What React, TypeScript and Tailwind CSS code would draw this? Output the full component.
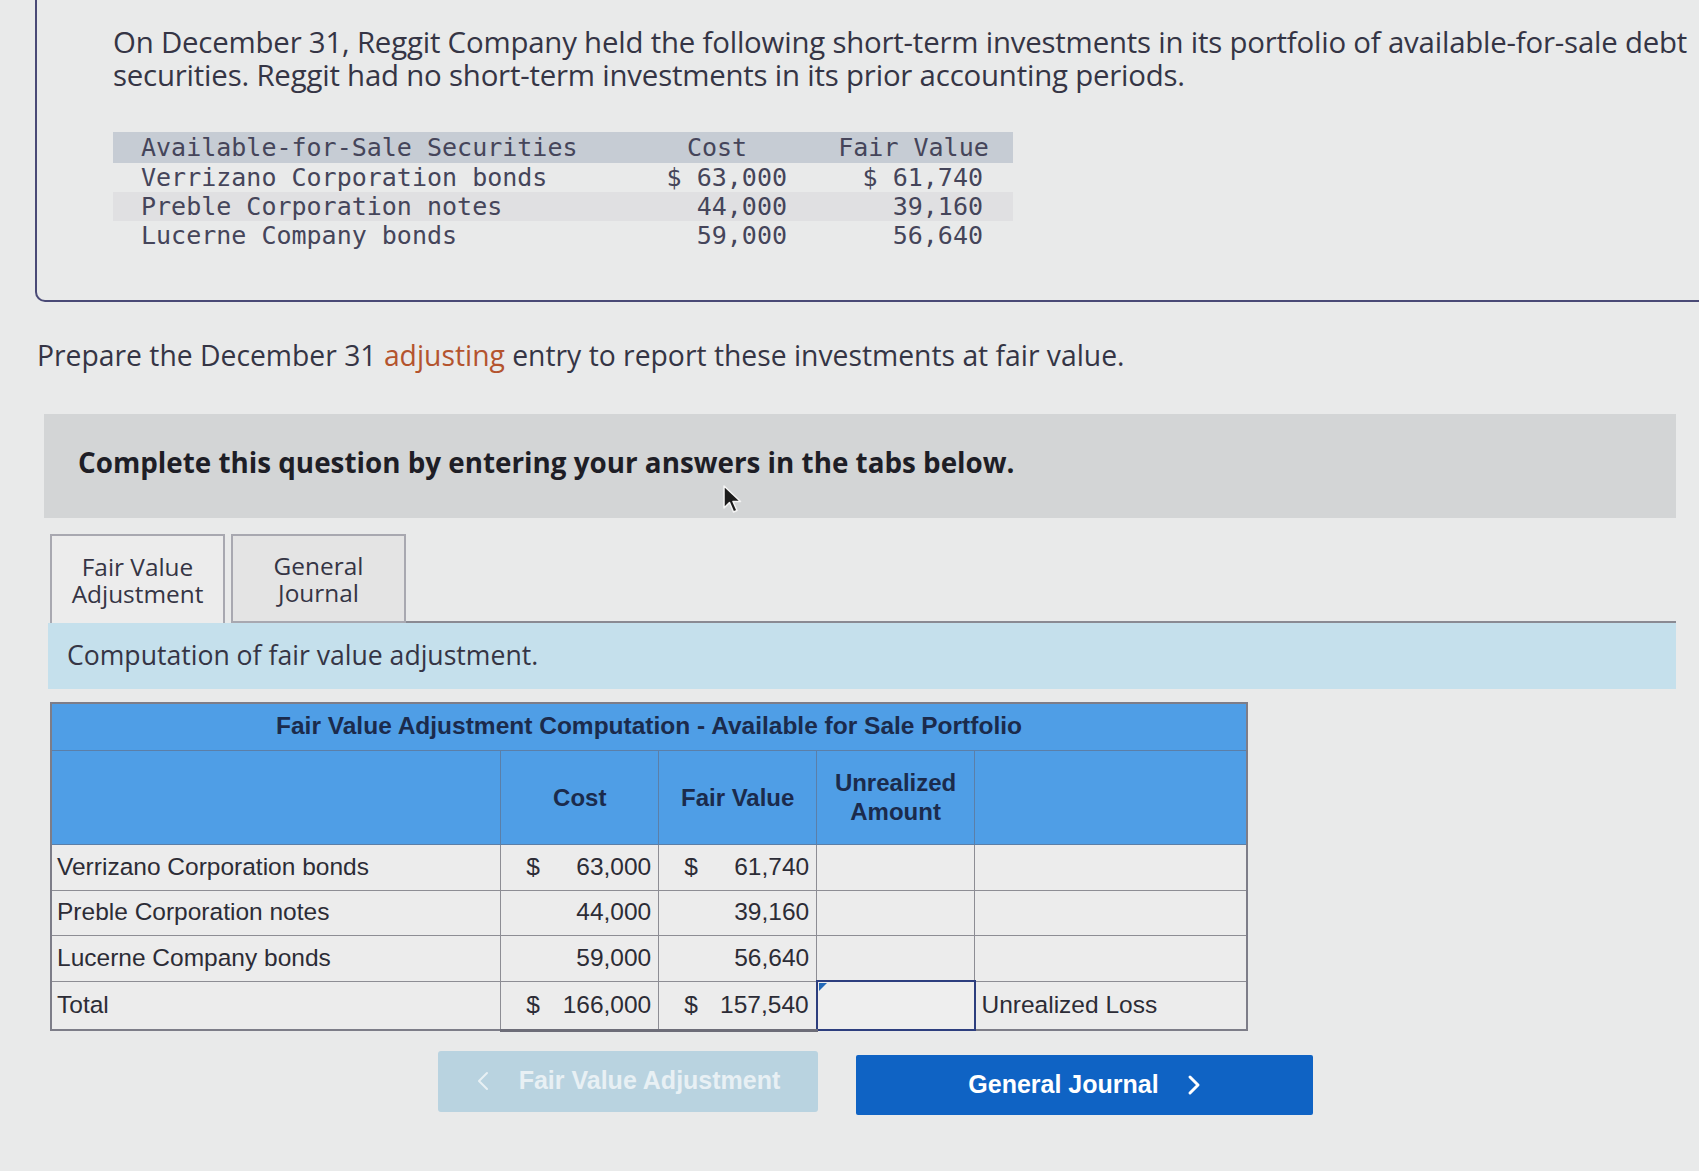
import type { ReactNode } from 'react';

type Holding = {
  name: string;
  cost: string;
  fair: string;
  shaded?: boolean;
  dollar?: boolean;
};

const holdings: Holding[] = [
  { name: 'Verrizano Corporation bonds', cost: '63,000', fair: '61,740', dollar: true },
  { name: 'Preble Corporation notes', cost: '44,000', fair: '39,160', shaded: true },
  { name: 'Lucerne Company bonds', cost: '59,000', fair: '56,640' },
];

const MoneyCell = ({
  value,
  dollar,
  className = '',
}: {
  value: string;
  dollar?: boolean;
  className?: string;
}) => (
  <td className={`border border-[#8d8d94] px-0 ${className}`}>
    <div className="flex items-center justify-between pl-[25px] pr-[7px]">
      <span>{dollar ? '$' : ''}</span>
      <span>{value}</span>
    </div>
  </td>
);

const HeadCell = ({ children }: { children?: ReactNode }) => (
  <th className="border border-[#5b7fa8] text-center text-[24px] font-bold leading-[29px] text-[#1b2b4c]">
    {children}
  </th>
);

const Chevron = ({ left, color }: { left?: boolean; color: string }) => (
  <svg width="14" height="22" viewBox="0 0 14 22">
    <path
      d={left ? 'M11 3 L3 11 L11 19' : 'M3 3 L11 11 L3 19'}
      fill="none"
      stroke={color}
      strokeWidth={left ? 2 : 3}
      strokeLinecap="round"
      strokeLinejoin="round"
    />
  </svg>
);

const Cursor = () => (
  <svg
    className="absolute left-[722px] top-[484px]"
    width="22"
    height="32"
    viewBox="0 0 22 32"
  >
    <path
      d="M2 2 L2 24 L7.5 18.5 L11.5 28 L15 26.5 L11 17.5 L18.5 17.5 Z"
      fill="#1c1c1c"
      stroke="#f4f4f4"
      strokeWidth="1.5"
      strokeLinejoin="round"
    />
  </svg>
);

const App = () => {
  return (
    <div className="relative min-h-[1171px] w-[1699px] overflow-hidden bg-[#e9eaea] pb-[40px] font-['Open_Sans','Noto_Sans',sans-serif] text-[#353545]">
      {/* problem statement box */}
      <div className="ml-[35px] h-[302px] rounded-bl-[10px] border-b-2 border-l-2 border-[#4a4a76] pl-[76px] pt-[26px]">
        <p className="whitespace-nowrap text-[29.4px] leading-[33px] tracking-[-0.2px]">
          On December 31, Reggit Company held the following short-term investments in its portfolio of available-for-sale debt
          <br />
          securities. Reggit had no short-term investments in its prior accounting periods.
        </p>

        <div className="mt-[40px] w-[900px] whitespace-pre font-['DejaVu_Sans_Mono','Liberation_Mono',monospace] text-[25px] text-[#45455a]">
          <div className="flex h-[31px] items-center bg-[#c6ccd4]">
            <span className="w-[534px] pl-[28px]">Available-for-Sale Securities</span>
            <span className="w-[140px] text-center">Cost</span>
            <span className="ml-[50px] w-[153px] text-center">Fair Value</span>
          </div>
          {holdings.map((h) => (
            <div
              key={h.name}
              className={`flex h-[29px] items-center ${h.shaded ? 'bg-[#e0e0e2]' : ''}`}
            >
              <span className="w-[534px] pl-[28px]">{h.name}</span>
              <span className="w-[140px] text-right">
                {h.dollar ? '$ ' : ''}
                {h.cost}
              </span>
              <span className="ml-[50px] w-[153px] pr-[7px] text-right">
                {h.dollar ? '$ ' : ''}
                {h.fair}
              </span>
            </div>
          ))}
        </div>
      </div>

      <p className="ml-[37px] mt-[36px] whitespace-nowrap text-[28.3px] leading-[34px]">
        Prepare the December 31 <span className="text-[#b4542e]">adjusting</span> entry to report these investments at fair value.
      </p>

      <div className="ml-[44px] mt-[42px] h-[104px] w-[1632px] bg-[#d3d5d6] pl-[34px] pt-[31px]">
        <p className="whitespace-nowrap text-[27.8px] font-bold leading-[34px] text-[#1e1e26]">
          Complete this question by entering your answers in the tabs below.
        </p>
      </div>

      {/* tabs */}
      <div className="ml-[48px] mt-[16px] w-[1628px]">
        <div className="flex items-end">
          <div className="ml-[2px] flex h-[89px] w-[175px] flex-col items-center justify-center border-x-2 border-t-2 border-[#a8a8b0] bg-[#ececec] text-[24.4px] leading-[27px]">
            <span>Fair Value</span>
            <span>Adjustment</span>
          </div>
          <div className="ml-[6px] flex h-[89px] w-[175px] flex-col items-center justify-center border-2 border-[#a8a8b0] bg-[#e4e4e4] text-[24.4px] leading-[27px]">
            <span>General</span>
            <span>Journal</span>
          </div>
          <div className="flex-1 border-b-2 border-[#8a8a92]" />
        </div>

        <div className="flex h-[66px] items-center bg-[#c5e0ec] pl-[19px] text-[26.6px]">
          Computation of fair value adjustment.
        </div>
      </div>

      {/* computation table */}
      <table className="ml-[50px] mt-[13px] w-[1198px] border-collapse border-2 border-[#7d7d88] font-['Liberation_Sans',Arial,sans-serif] text-[24.5px] text-[#2c2c36]">
        <colgroup>
          <col className="w-[451px]" />
          <col className="w-[158px]" />
          <col className="w-[158px]" />
          <col className="w-[158px]" />
          <col className="w-[273px]" />
        </colgroup>
        <thead className="bg-[#4f9ee6]">
          <tr className="h-[47px]">
            <th
              colSpan={5}
              className="border border-[#5b7fa8] text-center text-[24.5px] font-bold text-[#1b2b4c]"
            >
              Fair Value Adjustment Computation - Available for Sale Portfolio
            </th>
          </tr>
          <tr className="h-[94px]">
            <HeadCell />
            <HeadCell>Cost</HeadCell>
            <HeadCell>Fair Value</HeadCell>
            <HeadCell>
              Unrealized
              <br />
              Amount
            </HeadCell>
            <HeadCell />
          </tr>
        </thead>
        <tbody className="bg-[#ececec]">
          {holdings.map((h, i) => (
            <tr key={h.name} className={i === 1 ? 'h-[45px]' : 'h-[46px]'}>
              <td className="border border-[#8d8d94] pl-[5px]">{h.name}</td>
              <MoneyCell value={h.cost} dollar={h.dollar} />
              <MoneyCell value={h.fair} dollar={h.dollar} />
              <td className="border border-[#8d8d94]" />
              <td className="border border-[#8d8d94]" />
            </tr>
          ))}
          <tr className="h-[49px]">
            <td className="border border-[#8d8d94] pl-[5px]">Total</td>
            <MoneyCell value="166,000" dollar className="border-b-[3px] border-b-[#6d6d78]" />
            <MoneyCell value="157,540" dollar className="border-b-[3px] border-b-[#6d6d78]" />
            <td className="relative border-2 border-[#2d3e7e] bg-[#eeeeee]">
              <span className="absolute left-[1px] top-[1px] h-0 w-0 border-r-[8px] border-t-[8px] border-r-transparent border-t-[#2268b8]" />
            </td>
            <td className="border border-[#8d8d94] pl-[6px]">Unrealized Loss</td>
          </tr>
        </tbody>
      </table>

      {/* navigation buttons */}
      <div className="ml-[438px] mt-[19px] flex items-start gap-[38px] font-['Liberation_Sans',Arial,sans-serif] text-[25px] font-bold">
        <button
          type="button"
          disabled
          className="flex h-[61px] w-[380px] items-center justify-center gap-[29px] rounded-[3px] bg-[#b9d3e0] text-[#e8f0f4]"
        >
          <Chevron left color="#e8f0f4" />
          <span>Fair Value Adjustment</span>
        </button>
        <button
          type="button"
          className="mt-[4px] flex h-[60px] w-[457px] items-center justify-center gap-[28px] rounded-[2px] bg-[#0f63c4] text-white"
        >
          <span>General Journal</span>
          <Chevron color="white" />
        </button>
      </div>

      <Cursor />
    </div>
  );
};

export default App;
